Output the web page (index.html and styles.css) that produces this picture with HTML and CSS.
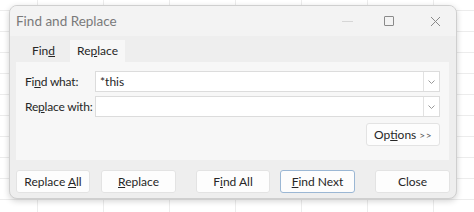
FILE: index.html
```html
<!DOCTYPE html>
<html lang="en">
<head>
  <meta charset="UTF-8" />
  <title>Find and Replace</title>
  <link rel="stylesheet" href="styles.css">
</head>
<body>
  <div class="dialog">
    <div class="titlebar">
      <span class="title">Find and Replace</span>
      <div class="controls">
        <span class="ctl min"></span>
        <span class="ctl max"></span>
        <svg class="ctl close" width="11" height="11" viewBox="0 0 11 11">
          <path d="M1 1 L10 10 M10 1 L1 10" stroke="#8a8a8a" stroke-width="1" fill="none"/>
        </svg>
      </div>
    </div>

    <div class="tabs">
      <div class="tab">Fin<u>d</u></div>
      <div class="tab active">Re<u>p</u>lace</div>
    </div>

    <div class="panel">
      <div class="row">
        <label>Fi<u>n</u>d what:</label>
        <div class="combo">
          <span class="value">*this</span>
          <span class="arrow">
            <svg width="7" height="4" viewBox="0 0 7 4"><path d="M0.5 0.5 L3.5 3.5 L6.5 0.5" stroke="#999" fill="none"/></svg>
          </span>
        </div>
      </div>
      <div class="row">
        <label>Re<u>p</u>lace with:</label>
        <div class="combo">
          <span class="value"></span>
          <span class="arrow">
            <svg width="7" height="4" viewBox="0 0 7 4"><path d="M0.5 0.5 L3.5 3.5 L6.5 0.5" stroke="#999" fill="none"/></svg>
          </span>
        </div>
      </div>
      <div class="options-row">
        <button class="btn options">Op<u>t</u>ions <span class="chev">&gt;&gt;</span></button>
      </div>
    </div>

    <div class="actions">
      <button class="btn">Replace <u>A</u>ll</button>
      <button class="btn b-replace"><u>R</u>eplace</button>
      <button class="btn b-findall">F<u>i</u>nd All</button>
      <button class="btn b-findnext default"><u>F</u>ind Next</button>
      <button class="btn b-close">Close</button>
    </div>
  </div>
</body>
</html>
```

FILE: styles.css
```css
* { box-sizing: border-box; margin: 0; padding: 0; }
body {
  font-family: Lato, "Noto Sans", sans-serif;
  font-size: 12px;
  color: #262626;
  background-color: #fff;
  background-image:
    linear-gradient(to right, #ececec 1px, transparent 1px),
    linear-gradient(to bottom, #ececec 1px, transparent 1px);
  background-size: 66px 21px;
  background-position: 37px 10px;
  width: 474px;
  height: 212px;
  overflow: hidden;
  padding: 5px 0 0 9px;
}
.dialog {
  width: 448px;
  height: 194px;
  background: #eeeeee;
  border: 1px solid #cfcfcf;
  border-radius: 8px;
  box-shadow: 0 2px 6px rgba(0,0,0,0.18);
  overflow: hidden;
}
.titlebar {
  height: 30px;
  background: #f3f3f3;
  display: flex;
  align-items: center;
  padding-left: 6px;
}
.title {
  font-size: 13.5px;
  color: #7a7a7a;
}
.controls {
  margin-left: auto;
  display: flex;
  align-items: center;
}
.ctl { display: block; }
.min {
  width: 11px;
  height: 1px;
  background: #d6d6d6;
  margin-right: 31px;
}
.max {
  width: 10px;
  height: 10px;
  border: 1px solid #8a8a8a;
  border-radius: 1px;
  margin-right: 36px;
}
.close { margin-right: 15px; }
.tabs {
  display: flex;
  margin-top: 4px;
  padding-left: 7px;
  height: 22px;
}
.tab {
  width: 53px;
  text-align: center;
  line-height: 22px;
}
.tab.active {
  width: 55px;
  background: #f7f7f7;
}
.panel {
  margin-left: 6px;
  width: 433px;
  height: 98px;
  background: #f7f7f7;
  padding: 9px 9px 0 9px;
}
.row {
  display: flex;
  align-items: center;
  height: 21px;
  margin-bottom: 4px;
}
.row label {
  flex: 0 0 70px;
  white-space: nowrap;
  letter-spacing: -0.2px;
}
.combo {
  flex: 1;
  min-width: 0;
  height: 21px;
  background: #fff;
  border: 1px solid #dcdcdc;
  display: flex;
  align-items: center;
}
.value {
  flex: 1;
  padding-left: 4px;
}
.arrow {
  width: 16px;
  height: 100%;
  border-left: 1px solid #e2e2e2;
  display: flex;
  align-items: center;
  justify-content: center;
}
.options-row {
  display: flex;
  justify-content: flex-end;
  margin-top: 6px;
}
.btn {
  font-family: inherit;
  font-size: 12px;
  color: #262626;
  background: #fdfdfd;
  border: 1px solid #e3e3e3;
  border-radius: 3px;
  height: 23px;
  width: 74px;
}
.chev {
  font-size: 10px;
  color: #555;
  letter-spacing: 0.5px;
}
.actions {
  display: flex;
  padding-left: 6px;
  margin-top: 10px;
}
.b-replace { margin-left: 11px; width: 75px; }
.b-findall { margin-left: 20px; }
.b-findnext { margin-left: 10px; width: 75px; }
.b-close { margin-left: 20px; width: 75px; }
.default { border-color: #9bb7d4; }
```
